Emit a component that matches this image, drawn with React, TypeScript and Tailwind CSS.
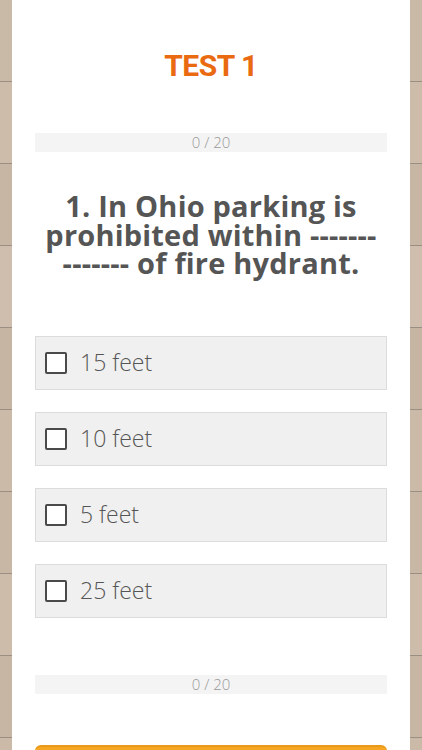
const planks = ["#c9b9a7", "#cdbcaa", "#c7b6a3", "#cfbead", "#c6b5a2", "#cbbaa8", "#c8b7a4", "#cdbcaa", "#c7b6a3", "#cbbaa7"];

function WoodStrip() {
  return (
    <div className="flex w-[12px] shrink-0 flex-col">
      {planks.map((c, i) => (
        <div key={i} className="h-[82px] shrink-0 border-b border-[#9a8f82]" style={{ backgroundColor: c }} />
      ))}
    </div>
  );
}

function Progress({ done, total }: { done: number; total: number }) {
  return (
    <div className="flex h-[19px] items-center justify-center bg-[#f4f4f4] text-[15px] font-light leading-none text-[#999999] [font-family:'Open_Sans',sans-serif]">
      {done} / {total}
    </div>
  );
}

const answers = ["15 feet", "10 feet", "5 feet", "25 feet"];

export default function App() {
  return (
    <div className="flex h-[750px] overflow-hidden bg-[#cbbaa8]">
      <WoodStrip />
      <main className="flex flex-1 flex-col bg-white px-[23px]">
        <h1 className="mt-[47px] text-center text-[30px] font-bold leading-[38px] tracking-[-0.5px] text-[#ea6a12] [font-family:Roboto,sans-serif]">
          TEST 1
        </h1>

        <div className="mt-[48px]">
          <Progress done={0} total={20} />
        </div>

        <h2 className="mt-[40px] text-center text-[29px] font-bold leading-[28.5px] tracking-[0.2px] text-[#555555] [font-family:'Open_Sans',sans-serif]">
          1. In Ohio parking is prohibited within <span className="whitespace-nowrap">-------</span>
          <wbr />
          <span className="whitespace-nowrap">-------</span> of fire hydrant.
        </h2>

        <ul className="mt-[58px] flex flex-col gap-[22px]">
          {answers.map((a) => (
            <li
              key={a}
              className="flex h-[54px] items-center gap-[13px] border border-[#dcdcdc] bg-[#f0f0f0] pl-[9px]"
            >
              <span className="h-[22px] w-[22px] shrink-0 rounded-[2px] border-2 border-[#4a4a4a] bg-white" />
              <span className="text-[23px] font-light text-[#555555] [font-family:'Open_Sans',sans-serif]">{a}</span>
            </li>
          ))}
        </ul>

        <div className="mt-[57px]">
          <Progress done={0} total={20} />
        </div>

        <button className="mt-[51px] h-[50px] shrink-0 rounded-[6px] border-t-2 border-[#e89a1a] bg-[#f6a623]" />
      </main>
      <WoodStrip />
    </div>
  );
}
